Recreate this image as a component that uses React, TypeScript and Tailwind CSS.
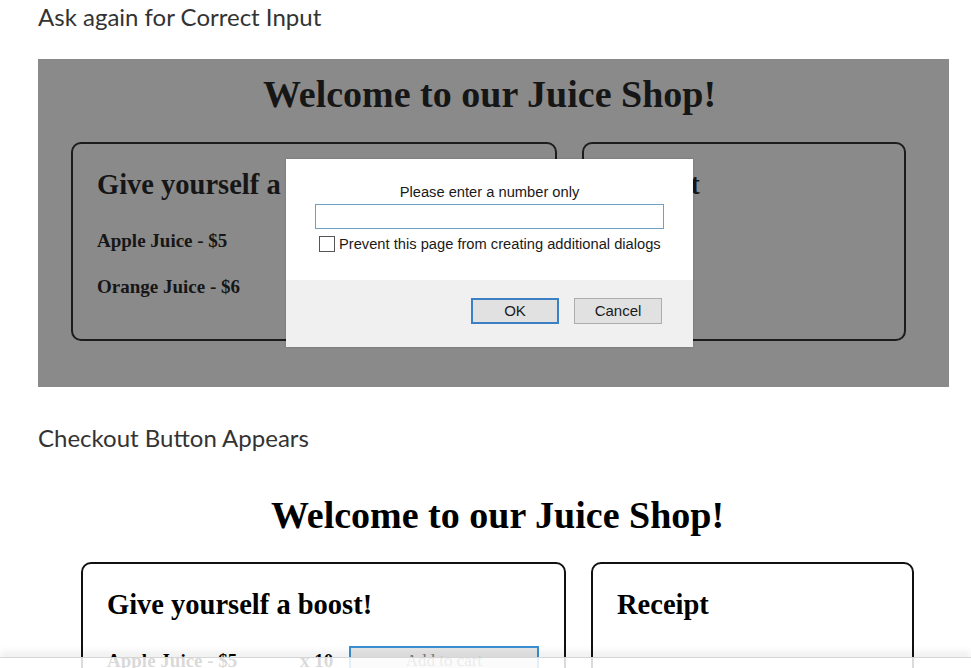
import React from 'react';

const serif = "font-['Liberation_Serif','Times_New_Roman',serif]";
const sans = "font-['Liberation_Sans',Arial,sans-serif]";

const App: React.FC = () => {
    return (
        <div className="relative h-[668px] overflow-hidden bg-white">
            <div className="px-[38px]">
                <div className="pt-[2px] h-[59px] font-['Lato',sans-serif] text-[24px] leading-[30px] text-[#333333]">
                    Ask again for Correct Input
                </div>

                {/* screenshot 1: prompt dialog over dimmed page */}
                <div className="relative w-[911px] h-[328px] bg-[#8a8a8a]">
                    <div className={`${serif} pt-[13px] pr-[8px] text-center text-[38px] leading-[44px] font-bold text-[#161616]`}>
                        Welcome to our Juice Shop!
                    </div>
                    <div className="flex gap-[25px] pl-[33px] pt-[26px]">
                        <div className="w-[486px] h-[199px] rounded-[10px] border-2 border-[#1c1c1c] px-[24px] pt-[25px]">
                            <div className={`${serif} text-[28.5px] leading-[32px] font-bold text-[#161616]`}>Give yourself a boost!</div>
                            <div className={`${serif} mt-[29px] text-[19px] leading-[22px] font-bold text-[#161616]`}>Apple Juice - $5</div>
                            <div className={`${serif} mt-[24px] text-[19px] leading-[22px] font-bold text-[#161616]`}>Orange Juice - $6</div>
                        </div>
                        <div className="w-[324px] h-[199px] rounded-[10px] border-2 border-[#1c1c1c] px-[24px] pt-[25px]">
                            <div className={`${serif} text-[28.5px] leading-[32px] font-bold text-[#161616]`}>Receipt</div>
                        </div>
                    </div>

                    <div className={`${sans} absolute left-[248px] top-[100px] w-[407px] h-[188px] flex flex-col bg-white shadow-[0_0_2px_rgba(0,0,0,0.2)]`}>
                        <div className="h-[121px] px-[29px] pt-[24px]">
                            <div className="text-center text-[14.7px] leading-[18px] text-[#1a1a1a]">Please enter a number only</div>
                            <div className="mt-[3px] h-[25px] border border-[#6e9fc4]" />
                            <div className="mt-[6px] ml-[4px] flex items-center gap-[4px] whitespace-nowrap">
                                <div className="w-[16px] h-[16px] shrink-0 border border-[#555555] bg-white" />
                                <span className="text-[14.7px] leading-[18px] text-[#1a1a1a]">Prevent this page from creating additional dialogs</span>
                            </div>
                        </div>
                        <div className="flex-1 bg-[#f0f0f0] flex justify-end items-start gap-[15px] pt-[18px] pr-[31px]">
                            <button className="w-[88px] h-[26px] border-2 border-[#3b7fc4] bg-[#e1e1e1] text-[15px] text-[#1a1a1a]">OK</button>
                            <button className="w-[88px] h-[26px] border border-[#adadad] bg-[#e1e1e1] text-[15px] text-[#1a1a1a]">Cancel</button>
                        </div>
                    </div>
                </div>

                <div className="pt-[36px] h-[100px] font-['Lato',sans-serif] text-[24px] leading-[30px] text-[#333333]">
                    Checkout Button Appears
                </div>

                {/* screenshot 2: page with cart row */}
                <div className="ml-[43px] w-[833px]">
                    <div className={`${serif} pt-[6px] text-center text-[38px] leading-[44px] font-bold text-black`}>
                        Welcome to our Juice Shop!
                    </div>
                    <div className="flex gap-[25px] pt-[25px]">
                        <div className="w-[485px] h-[200px] rounded-[10px] border-2 border-[#111111] px-[24px] pt-[25px]">
                            <div className={`${serif} text-[28.5px] leading-[32px] font-bold text-black`}>Give yourself a boost!</div>
                            <div className="mt-[25px] flex items-center">
                                <div className={`${serif} w-[193px] text-[19px] leading-[22px] font-bold text-black`}>Apple Juice - $5</div>
                                <div className={`${serif} w-[49px] text-[19px] leading-[22px] font-bold text-black`}>x 10</div>
                                <button className={`${serif} w-[190px] h-[30px] border-2 border-[#3b8fd0] bg-[#e6e6e6] text-[17px] text-[#777777]`}>Add to cart</button>
                            </div>
                        </div>
                        <div className="w-[323px] h-[200px] rounded-[10px] border-2 border-[#111111] px-[24px] pt-[25px]">
                            <div className={`${serif} text-[28.5px] leading-[32px] font-bold text-black`}>Receipt</div>
                        </div>
                    </div>
                </div>
            </div>

            {/* translucent bottom bar */}
            <div className="absolute left-0 right-0 bottom-0 h-[11px] bg-white/85 border-t border-[#d6d6d6] shadow-[0_-6px_6px_rgba(0,0,0,0.06)]" />
        </div>
    );
};

export default App;
